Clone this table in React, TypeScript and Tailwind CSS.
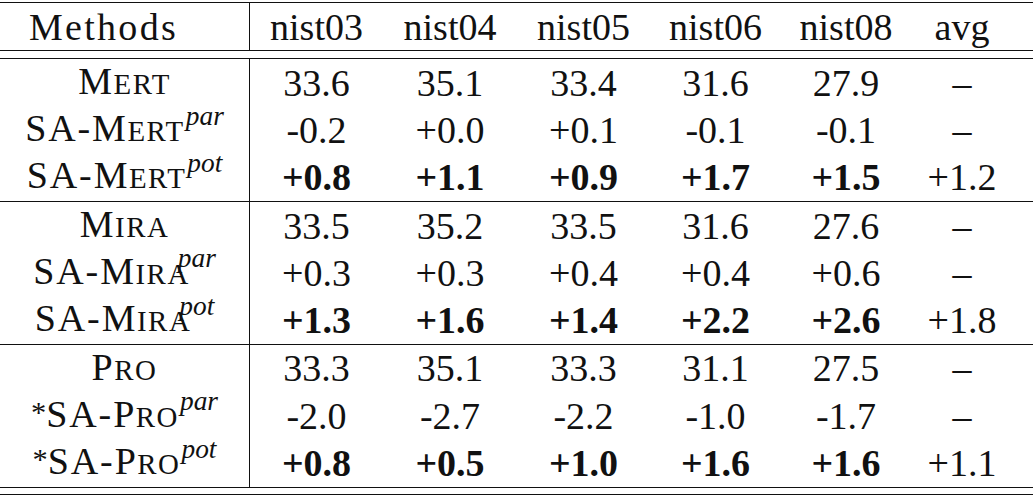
import React from "react";

type Row = {
	prefix?: string;
	name: string;
	sup?: string;
	overlap?: boolean;
	vals: string[];
	bold?: boolean;
};

const BLOCKS: Row[][] = [
	[
		{ name: "MERT", vals: ["33.6", "35.1", "33.4", "31.6", "27.9", "–"] },
		{ prefix: "SA-", name: "MERT", sup: "par", vals: ["-0.2", "+0.0", "+0.1", "-0.1", "-0.1", "–"] },
		{ prefix: "SA-", name: "MERT", sup: "pot", bold: true, vals: ["+0.8", "+1.1", "+0.9", "+1.7", "+1.5", "+1.2"] },
	],
	[
		{ name: "MIRA", vals: ["33.5", "35.2", "33.5", "31.6", "27.6", "–"] },
		{ prefix: "SA-", name: "MIRA", sup: "par", overlap: true, vals: ["+0.3", "+0.3", "+0.4", "+0.4", "+0.6", "–"] },
		{ prefix: "SA-", name: "MIRA", sup: "pot", overlap: true, bold: true, vals: ["+1.3", "+1.6", "+1.4", "+2.2", "+2.6", "+1.8"] },
	],
	[
		{ name: "PRO", vals: ["33.3", "35.1", "33.3", "31.1", "27.5", "–"] },
		{ prefix: "*SA-", name: "PRO", sup: "par", vals: ["-2.0", "-2.7", "-2.2", "-1.0", "-1.7", "–"] },
		{ prefix: "*SA-", name: "PRO", sup: "pot", bold: true, vals: ["+0.8", "+0.5", "+1.0", "+1.6", "+1.6", "+1.1"] },
	],
];

const HEADS = ["nist03", "nist04", "nist05", "nist06", "nist08", "avg"];

const cols = "grid grid-cols-[250px_133px_134px_133px_131px_130px_102px_1fr]";
const serif = "font-['Liberation_Serif'] text-[38px]";

function Rule() {
	return <div className="h-px bg-[#111]" />;
}

function SmallCaps({ text }: { text: string }) {
	return (
		<>
			{text[0]}
			<span className="text-[0.76em]">{text.slice(1)}</span>
		</>
	);
}

function MethodName({ row }: { row: Row }) {
	return (
		<span className={`${serif} whitespace-nowrap`}>
			{row.prefix?.startsWith("*") && <span className="text-[0.8em] relative -top-[0.15em]">*</span>}
			{row.prefix && <span className="tracking-[0.05em]">{row.prefix.replace("*", "")}</span>}
			<span className="tracking-[0.04em]">
				<SmallCaps text={row.name} />
			</span>
			{row.sup && (
				<span className={`italic text-[0.72em] relative -top-[0.6em] ${row.overlap ? "-ml-[12px]" : "ml-[1px]"}`}>
					{row.sup}
				</span>
			)}
		</span>
	);
}

export default function App() {
	return (
		<div className="w-[1033px] h-[499px] bg-white text-[#111] font-['Liberation_Serif'] text-[38px] leading-[40px] pt-[2px]">
			<Rule />
			<div className={`${cols} h-[47px]`}>
				<div className="flex items-center justify-center pr-[42px] border-r border-[#111]">
					<span className={`${serif} tracking-[0.06em]`}>Methods</span>
				</div>
				{HEADS.map((h) => (
					<div key={h} className="flex items-center justify-center">
						<span className={serif}>{h}</span>
					</div>
				))}
				<div />
			</div>
			<Rule />
			<div className="h-[7px]" />
			<Rule />
			{BLOCKS.map((block, bi) => (
				<div key={bi}>
					{bi > 0 && <Rule />}
					{block.map((row, ri) => (
						<div key={ri} className={`${cols} h-[47.3px]`}>
							<div className="flex items-center justify-center border-r border-[#111]">
								<MethodName row={row} />
							</div>
							{row.vals.map((v, vi) => (
								<div key={vi} className="flex items-center justify-center">
									<span className={`${serif} ${row.bold && vi < 5 ? "font-bold" : "font-normal"}`}>{v}</span>
								</div>
							))}
							<div />
						</div>
					))}
				</div>
			))}
			<Rule />
			<div className="h-[6px]" />
			<Rule />
		</div>
	);
}
